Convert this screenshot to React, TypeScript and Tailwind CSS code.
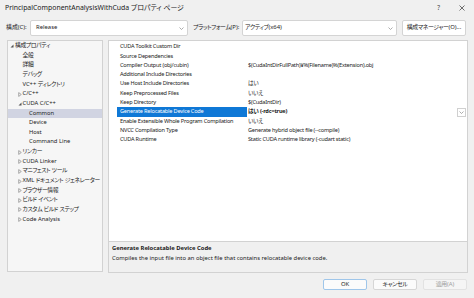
import React from "react";

type TreeItem = { label: string; level: 0 | 1 | 2; arrow?: "open" | "closed"; selected?: boolean };

const tree: TreeItem[] = [
  { label: "構成プロパティ", level: 0, arrow: "open" },
  { label: "全般", level: 1 },
  { label: "詳細", level: 1 },
  { label: "デバッグ", level: 1 },
  { label: "VC++ ディレクトリ", level: 1 },
  { label: "C/C++", level: 1, arrow: "closed" },
  { label: "CUDA C/C++", level: 1, arrow: "open" },
  { label: "Common", level: 2, selected: true },
  { label: "Device", level: 2 },
  { label: "Host", level: 2 },
  { label: "Command Line", level: 2 },
  { label: "リンカー", level: 1, arrow: "closed" },
  { label: "CUDA Linker", level: 1, arrow: "closed" },
  { label: "マニフェスト ツール", level: 1, arrow: "closed" },
  { label: "XML ドキュメント ジェネレーター", level: 1, arrow: "closed" },
  { label: "ブラウザー情報", level: 1, arrow: "closed" },
  { label: "ビルド イベント", level: 1, arrow: "closed" },
  { label: "カスタム ビルド ステップ", level: 1, arrow: "closed" },
  { label: "Code Analysis", level: 1, arrow: "closed" },
];

const rows: { name: string; value: string; selected?: boolean }[] = [
  { name: "CUDA Toolkit Custom Dir", value: "" },
  { name: "Source Dependencies", value: "" },
  { name: "Compiler Output (obj/cubin)", value: "$(CudaIntDirFullPath)¥%(Filename)%(Extension).obj" },
  { name: "Additional Include Directories", value: "" },
  { name: "Use Host Include Directories", value: "はい" },
  { name: "Keep Preprocessed Files", value: "いいえ" },
  { name: "Keep Directory", value: "$(CudaIntDir)" },
  { name: "Generate Relocatable Device Code", value: "はい (-rdc=true)", selected: true },
  { name: "Enable Extensible Whole Program Compilation", value: "いいえ" },
  { name: "NVCC Compilation Type", value: "Generate hybrid object file (--compile)" },
  { name: "CUDA Runtime", value: "Static CUDA runtime library (-cudart static)" },
];

function jp(text: string) {
  const parts = text.split(/([\u3000-\u30ff\u4e00-\u9fff]+)/);
  return parts.map((p, i) =>
    /[\u3000-\u30ff\u4e00-\u9fff]/.test(p) ? (
      <span key={i} className="tracking-[-0.35px]">
        {p}
      </span>
    ) : (
      <React.Fragment key={i}>{p}</React.Fragment>
    )
  );
}

function Chevron() {
  return (
    <svg width="5" height="3" viewBox="0 0 5 3" className="shrink-0">
      <path d="M0.5 0.5 L2.5 2.5 L4.5 0.5" fill="none" stroke="#8a8a8a" strokeWidth="0.7" />
    </svg>
  );
}

function Arrow({ kind }: { kind?: "open" | "closed" }) {
  if (kind === "open")
    return (
      <svg width="4" height="4" viewBox="0 0 4 4">
        <path d="M3.5 0.5 L3.5 3.5 L0.5 3.5 Z" fill="#555" />
      </svg>
    );
  if (kind === "closed")
    return (
      <svg width="4" height="5" viewBox="0 0 4 5">
        <path d="M0.7 0.6 L3.3 2.5 L0.7 4.4 Z" fill="none" stroke="#777" strokeWidth="0.6" />
      </svg>
    );
  return null;
}

export default function App() {
  return (
    <div className="w-[474px] h-[298px] bg-[#f0f0f0] overflow-hidden relative font-['Noto_Sans','Noto_Sans_CJK_JP',sans-serif] [font-feature-settings:'palt'] text-[6px] text-[#1b1b1b] leading-none whitespace-nowrap">
      {/* title bar */}
      <div className="h-[16px] flex items-center pl-[5px] pr-[9px]">
        <div className="text-[6.9px] flex-1">PrincipalComponentAnalysisWithCuda プロパティ ページ</div>
        <div className="text-[6.4px] text-[#444] mr-[19px]">?</div>
        <svg width="6" height="6" viewBox="0 0 6 6">
          <path d="M0.5 0.5 L5.5 5.5 M5.5 0.5 L0.5 5.5" stroke="#333" strokeWidth="0.7" />
        </svg>
      </div>

      {/* config row */}
      <div className="mt-[4px] h-[16px] flex items-center pl-[6px] text-[5.9px]">
        <div className="w-[24px]">構成(C):</div>
        <div className="w-[158px] h-[16px] bg-white border border-[#d4d4d4] rounded-[2px] flex items-center pl-[5px] pr-[3px]">
          <span className="flex-1">Release</span>
          <Chevron />
        </div>
        <div className="w-[54px] shrink-0 pl-[5px]">{jp("プラットフォーム")}(P):</div>
        <div className="w-[155px] h-[16px] bg-white border border-[#d4d4d4] rounded-[2px] flex items-center pl-[2px] pr-[3px]">
          <span className="flex-1">{jp("アクティブ")}(x64)</span>
          <Chevron />
        </div>
        <div className="ml-[5px] w-[64px] h-[16px] bg-white border border-[#d4d4d4] rounded-[2px] flex items-center justify-center">
          {jp("構成マネージャー")}(O)...
        </div>
      </div>

      {/* main */}
      <div className="mt-[4px] flex pl-[7px]">
        <div className="w-[96px] h-[232px] bg-[#f6f6f6] border border-[#d2d2d2] flex flex-col overflow-hidden text-[5.8px]">
          {tree.map((t, i) => (
            <div
              key={i}
              className={`h-[9.67px] shrink-0 flex items-center ${t.selected ? "bg-[#d1d4e2]" : ""} ${
                t.level === 0 ? "pl-[2px]" : t.level === 1 ? "pl-[9.5px]" : "pl-[16px]"
              }`}
            >
              <div className="w-[5px] shrink-0 flex items-center">
                <Arrow kind={t.arrow} />
              </div>
              <span>{jp(t.label)}</span>
            </div>
          ))}
        </div>

        <div className="ml-[5px] w-[360px] flex flex-col">
          <div className="h-[202px] bg-white border border-[#d2d2d2] pt-[1.4px] overflow-hidden text-[5.6px] tracking-[-0.2px]">
            {rows.map((r, i) => (
              <div key={i} className="h-[9.3px] flex items-center">
                <div className="w-[8px] shrink-0" />
                <div
                  className={`w-[130px] shrink-0 h-full flex items-center overflow-hidden pl-[3px] ${
                    r.selected ? "bg-[#0f78d6] text-white" : ""
                  }`}
                >
                  {r.name}
                </div>
                <div className="w-[1px] shrink-0" />
                <div className={`flex-1 h-full flex items-center ${r.selected ? "font-bold" : ""}`}>
                  <span className="flex-1">{r.value}</span>
                  {r.selected && (
                    <div className="w-[9px] h-[9px] border border-[#d0d0d0] bg-white flex items-center justify-center mr-[1px]">
                      <Chevron />
                    </div>
                  )}
                </div>
              </div>
            ))}
          </div>
          <div className="h-[31px] bg-[#f0f0f0] border border-[#d2d2d2] border-t-0 pl-[3px] pt-[4px] text-[5.85px]">
            <div className="font-bold">Generate Relocatable Device Code</div>
            <div className="mt-[4px]">Compiles the input file into an object file that contains relocatable device code.</div>
          </div>
        </div>
      </div>

      {/* buttons */}
      <div className="mt-[6px] flex justify-end pr-[7px] gap-[6px] text-[5.9px]">
        <div className="w-[44px] h-[11px] bg-[#fbfbfb] border border-[#9fc6ea] rounded-[2px] flex items-center justify-center">OK</div>
        <div className="w-[44px] h-[11px] bg-[#fbfbfb] border border-[#d6d6d6] rounded-[2px] flex items-center justify-center">{jp("キャンセル")}</div>
        <div className="w-[44px] h-[11px] bg-[#f5f5f5] border border-[#e2e2e2] rounded-[2px] flex items-center justify-center text-[#a0a0a0]">{jp("適用")}(A)</div>
      </div>
    </div>
  );
}
